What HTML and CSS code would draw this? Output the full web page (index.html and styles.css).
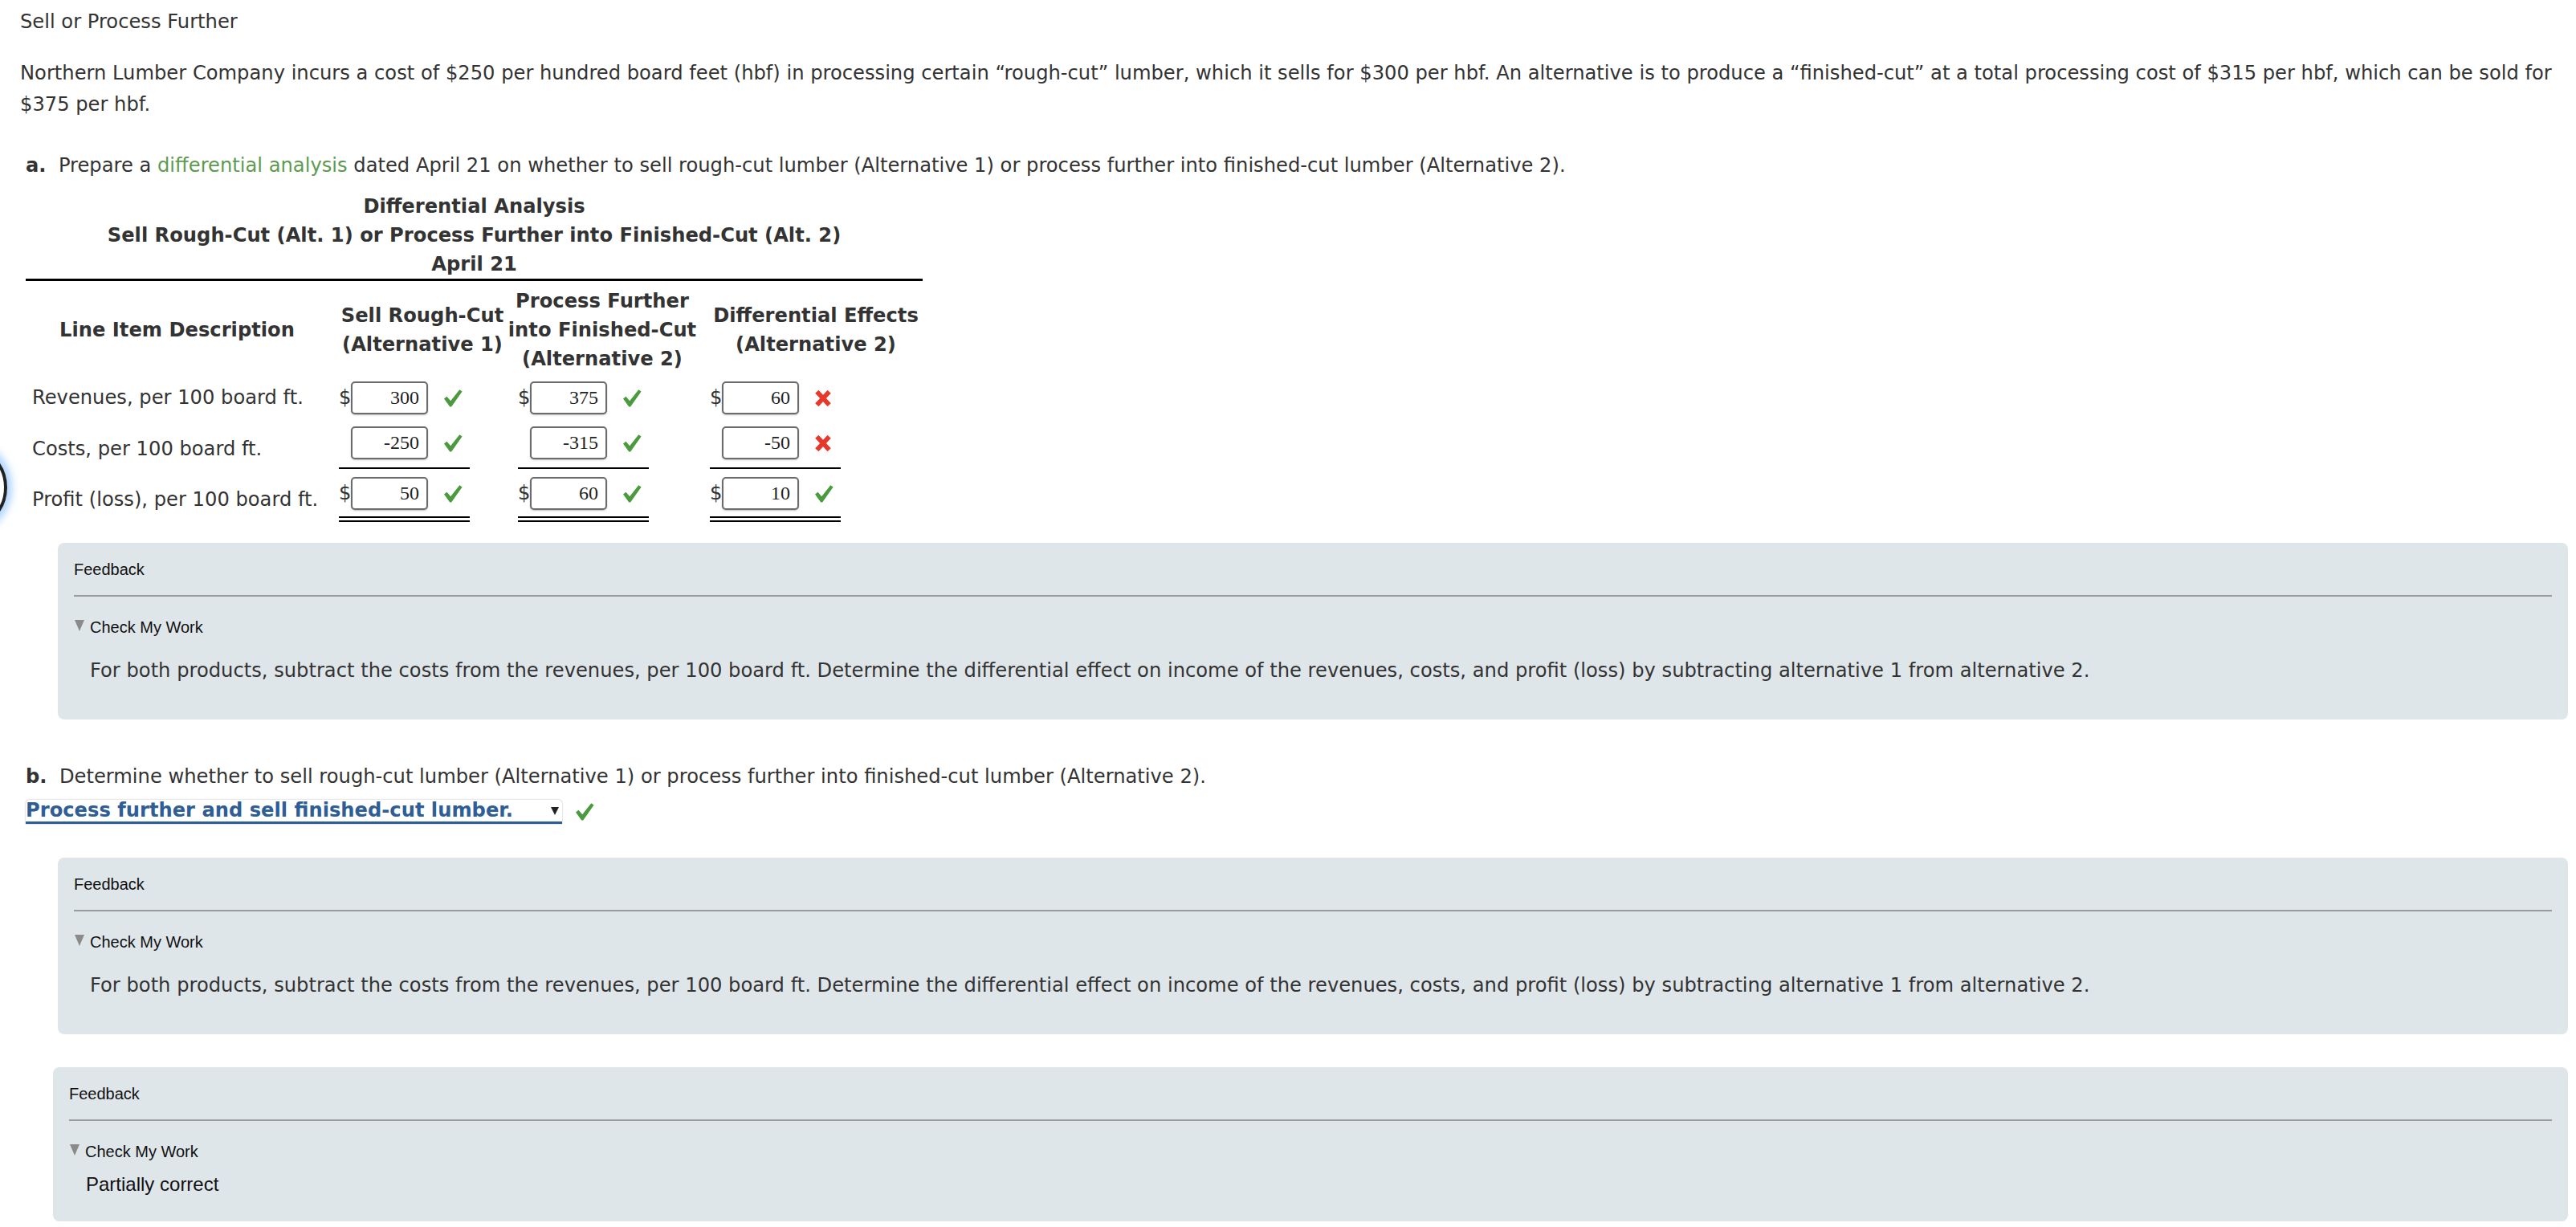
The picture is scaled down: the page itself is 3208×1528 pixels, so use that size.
FILE: index.html
```html
<!DOCTYPE html>
<html lang="en">
<head>
<meta charset="utf-8">
<title>Sell or Process Further</title>
<link rel="stylesheet" href="styles.css">
</head>
<body>
<div class="ring"></div>
<div class="page">
  <div class="title">Sell or Process Further</div>
  <p class="intro">Northern Lumber Company incurs a cost of $250 per hundred board feet (hbf) in processing certain “rough-cut” lumber, which it sells for $300 per hbf. An alternative is to produce a “finished-cut” at a total processing cost of $315 per hbf, which can be sold for $375 per hbf.</p>

  <div class="part">
    <p class="q"><b>a.</b>&nbsp; Prepare a <span class="link">differential analysis</span> dated April 21 on whether to sell rough-cut lumber (Alternative 1) or process further into finished-cut lumber (Alternative 2).</p>

    <div class="da">
      <div class="da-title">Differential Analysis<br>Sell Rough-Cut (Alt. 1) or Process Further into Finished-Cut (Alt. 2)<br>April 21</div>
      <div class="grid">
        <div class="hd hd-desc">Line Item Description</div>
        <div class="hd hd-c2">Sell Rough-Cut<br>(Alternative 1)</div>
        <div class="hd hd-c3">Process Further<br>into Finished-Cut<br>(Alternative 2)</div>
        <div class="hd hd-c4">Differential Effects<br>(Alternative 2)</div>

        <div class="lbl r1">Revenues, per 100 board ft.</div>
        <div class="cell c2 r1"><div class="amt"><span class="cur">$</span><span class="box">300</span><svg class="ok" viewBox="0 0 24 24"><path d="M1 12.5 L4.5 9.8 L9.2 15.2 L20.3 1.2 L23.6 3.6 L10.2 22.6 L8.2 22.6 Z"/></svg></div></div>
        <div class="cell c3 r1"><div class="amt"><span class="cur">$</span><span class="box">375</span><svg class="ok" viewBox="0 0 24 24"><path d="M1 12.5 L4.5 9.8 L9.2 15.2 L20.3 1.2 L23.6 3.6 L10.2 22.6 L8.2 22.6 Z"/></svg></div></div>
        <div class="cell c4 r1"><div class="amt"><span class="cur">$</span><span class="box">60</span><svg class="bad" viewBox="0 0 20 18"><path d="M3 1.5 L17 16.5 M17 1.5 L3 16.5"/></svg></div></div>

        <div class="lbl r2">Costs, per 100 board ft.</div>
        <div class="cell c2 r2"><div class="amt sub"><span class="cur hidden">$</span><span class="box">-250</span><svg class="ok" viewBox="0 0 24 24"><path d="M1 12.5 L4.5 9.8 L9.2 15.2 L20.3 1.2 L23.6 3.6 L10.2 22.6 L8.2 22.6 Z"/></svg></div></div>
        <div class="cell c3 r2"><div class="amt sub"><span class="cur hidden">$</span><span class="box">-315</span><svg class="ok" viewBox="0 0 24 24"><path d="M1 12.5 L4.5 9.8 L9.2 15.2 L20.3 1.2 L23.6 3.6 L10.2 22.6 L8.2 22.6 Z"/></svg></div></div>
        <div class="cell c4 r2"><div class="amt sub"><span class="cur hidden">$</span><span class="box">-50</span><svg class="bad" viewBox="0 0 20 18"><path d="M3 1.5 L17 16.5 M17 1.5 L3 16.5"/></svg></div></div>

        <div class="lbl r3">Profit (loss), per 100 board ft.</div>
        <div class="cell c2 r3"><div class="amt tot"><span class="cur">$</span><span class="box">50</span><svg class="ok" viewBox="0 0 24 24"><path d="M1 12.5 L4.5 9.8 L9.2 15.2 L20.3 1.2 L23.6 3.6 L10.2 22.6 L8.2 22.6 Z"/></svg></div></div>
        <div class="cell c3 r3"><div class="amt tot"><span class="cur">$</span><span class="box">60</span><svg class="ok" viewBox="0 0 24 24"><path d="M1 12.5 L4.5 9.8 L9.2 15.2 L20.3 1.2 L23.6 3.6 L10.2 22.6 L8.2 22.6 Z"/></svg></div></div>
        <div class="cell c4 r3"><div class="amt tot"><span class="cur">$</span><span class="box">10</span><svg class="ok" viewBox="0 0 24 24"><path d="M1 12.5 L4.5 9.8 L9.2 15.2 L20.3 1.2 L23.6 3.6 L10.2 22.6 L8.2 22.6 Z"/></svg></div></div>
      </div>
    </div>

    <div class="feedback fb1">
      <div class="fb-label">Feedback</div>
      <div class="fb-rule"></div>
      <div class="fb-toggle"><span class="tri"></span>Check My Work</div>
      <p class="fb-text">For both products, subtract the costs from the revenues, per 100 board ft. Determine the differential effect on income of the revenues, costs, and profit (loss) by subtracting alternative 1 from alternative 2.</p>
    </div>
  </div>

  <div class="part partb">
    <p class="q"><b>b.</b>&nbsp; Determine whether to sell rough-cut lumber (Alternative 1) or process further into finished-cut lumber (Alternative 2).</p>
    <div class="answer">
      <div class="select"><span class="sel-text">Process further and sell finished-cut lumber.</span><span class="sel-arrow"></span></div>
      <svg class="ok" viewBox="0 0 24 24"><path d="M1 12.5 L4.5 9.8 L9.2 15.2 L20.3 1.2 L23.6 3.6 L10.2 22.6 L8.2 22.6 Z"/></svg>
    </div>
    <div class="feedback fb2">
      <div class="fb-label">Feedback</div>
      <div class="fb-rule"></div>
      <div class="fb-toggle"><span class="tri"></span>Check My Work</div>
      <p class="fb-text">For both products, subtract the costs from the revenues, per 100 board ft. Determine the differential effect on income of the revenues, costs, and profit (loss) by subtracting alternative 1 from alternative 2.</p>
    </div>
  </div>

  <div class="feedback fb3">
    <div class="fb-label">Feedback</div>
    <div class="fb-rule"></div>
    <div class="fb-toggle"><span class="tri"></span>Check My Work</div>
    <p class="fb-partial">Partially correct</p>
  </div>
</div>
</body>
</html>
```

FILE: styles.css
```css
html, body {
  margin: 0;
  padding: 0;
  background: #ffffff;
}
body {
  font-family: "DejaVu Sans", Verdana, sans-serif;
  font-size: 24.2px;
  line-height: 39px;
  color: #333333;
  position: relative;
  overflow: hidden;
  height: 1528px;
}
.page {
  padding: 8px 10px 0 25px;
}
.title {
  margin: 0;
}
.intro {
  margin: 25px 0 0 0;
}
.part {
  margin-left: 7px;
}
.q {
  margin: 37px 0 0 0;
}
.q b {
  font-weight: bold;
}
.link {
  color: #5e9b50;
}

/* Differential analysis */
.da {
  width: 1117px;
  margin-top: 13px;
}
.da-title {
  font-weight: bold;
  text-align: center;
  line-height: 36px;
  border-bottom: 3px solid #000;
}
.grid {
  display: grid;
  grid-template-columns: 387px 214px 240px 276px;
}
.hd {
  font-weight: bold;
  text-align: center;
  line-height: 36px;
  height: 121px;
  display: flex;
  align-items: center;
  justify-content: center;
  white-space: nowrap;
}
.hd-desc { padding-right: 10px; }
.hd-c3 { padding-right: 6px; }
.hd-c4 { padding-left: 10px; }
.lbl {
  display: flex;
  align-items: center;
  padding-left: 8px;
  white-space: nowrap;
}
.lbl.r1 { padding-bottom: 11px; }
.lbl.r2 { padding-top: 4px; }
.lbl.r3 { padding-top: 10px; }
.cell {
  display: flex;
  align-items: flex-start;
}
.c2 { padding-left: 3px; }
.c3 { padding-left: 12px; }
.c4 { padding-left: 11px; }
.amt {
  display: flex;
  align-items: center;
  width: 163px;
  box-sizing: border-box;
  padding-right: 9px;
}
.r1 .amt { padding-top: 4px; padding-bottom: 15px; }
.amt.sub { padding-top: 0; padding-bottom: 10px; border-bottom: 2px solid #000; }
.amt.tot { padding-top: 10px; padding-bottom: 8px; border-bottom: 7px double #000; }
.cur {
  width: 15px;
  color: #333;
}
.cur.hidden { visibility: hidden; }
.box {
  width: 96px;
  height: 41px;
  box-sizing: border-box;
  border: 2px solid #6b6b6b;
  border-radius: 5px;
  background: #fff;
  box-shadow: 0 1px 2px rgba(0,0,0,0.25);
  font-family: "Liberation Serif", "Times New Roman", serif;
  font-size: 24px;
  line-height: 37px;
  text-align: right;
  padding-right: 9px;
  color: #222;
}
.ok {
  width: 24px;
  height: 24px;
  margin-left: 19px;
  flex: none;
}
.ok path {
  fill: #4b9a3d;
}
.bad {
  width: 22px;
  height: 20px;
  margin-left: 19px;
  flex: none;
}
.bad path {
  fill: none;
  stroke: #e6392b;
  stroke-width: 5.2;
  stroke-linecap: butt;
}

/* Feedback panels */
.feedback {
  background: #dfe6ea;
  border-radius: 8px;
  padding: 21px 20px 41px 20px;
  font-family: "Liberation Sans", Arial, sans-serif;
  color: #111;
}
.fb1 {
  margin: 26px 0 0 40px;
}
.fb-label {
  font-size: 20px;
  line-height: 24px;
}
.fb-rule {
  height: 2px;
  background: #989ca0;
  margin-top: 20px;
}
.fb-toggle {
  font-size: 20px;
  line-height: 24px;
  margin-top: 26px;
  display: flex;
  align-items: center;
}
.tri {
  width: 0;
  height: 0;
  border-left: 6px solid transparent;
  border-right: 6px solid transparent;
  border-top: 14px solid #8a8a8a;
  margin: 0 7px 4px 1px;
}
.fb-text {
  margin: 23px 0 0 20px;
  font-family: "DejaVu Sans", Verdana, sans-serif;
  font-size: 24.2px;
  line-height: 39px;
  color: #333;
}

/* Part b */
.partb .q {
  margin-top: 52px;
}
.answer {
  display: flex;
  align-items: center;
  margin-top: 9px;
}
.select {
  width: 668px;
  height: 30px;
  box-sizing: border-box;
  background: #fff;
  border-radius: 5px 5px 0 0;
  box-shadow: 0 0 2px rgba(0,0,0,0.35);
  border-bottom: 3px solid #2e5e95;
  display: flex;
  align-items: center;
  justify-content: space-between;
  padding-right: 4px;
}
.sel-text {
  color: #2e5e95;
  font-weight: bold;
  font-size: 24.2px;
  line-height: 27px;
}
.sel-arrow {
  width: 0;
  height: 0;
  border-left: 5px solid transparent;
  border-right: 5px solid transparent;
  border-top: 10px solid #222;
}
.answer .ok {
  margin-left: 16px;
  width: 24px;
  height: 26px;
}
.fb2 {
  margin: 42px 0 0 40px;
}
.fb3 {
  margin: 41px 0 0 41px;
  padding-bottom: 31px;
}
.fb-partial {
  margin: 14px 0 0 21px;
  font-size: 24px;
  line-height: 30px;
  color: #111;
}

/* Decorative focus ring at left edge */
.ring {
  position: absolute;
  left: -101px;
  top: 552px;
  width: 102px;
  height: 102px;
  border: 4px solid #222;
  border-radius: 50%;
  box-shadow: 0 0 10px 6px rgba(110, 180, 255, 0.55);
}
```
